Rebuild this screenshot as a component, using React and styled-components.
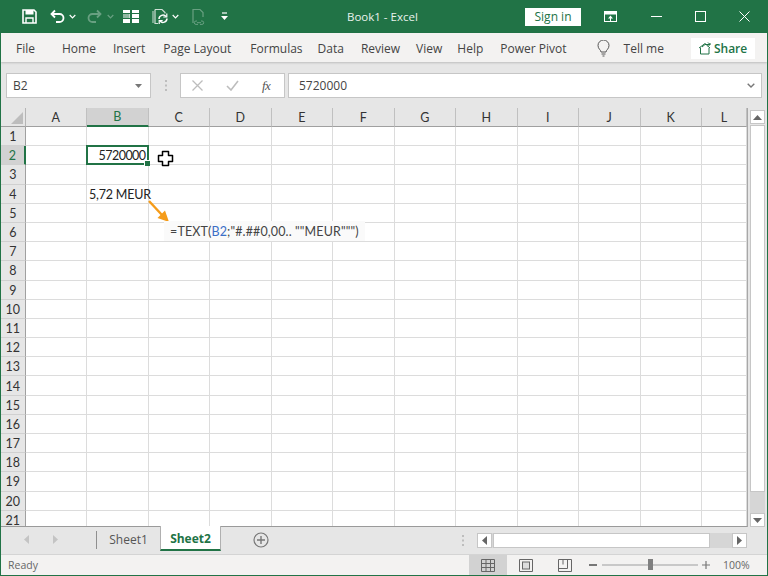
import React from 'react';
import styled, { createGlobalStyle } from 'styled-components';

const Global = createGlobalStyle`
  html, body { margin: 0; padding: 0; background: #fff; }
  * { box-sizing: border-box; }
`;

const UI = `"Open Sans", "Noto Sans", "Liberation Sans", sans-serif`;
const CELL = `Lato, "Open Sans", "Liberation Sans", sans-serif`;
const GREEN = '#217346';

const Window = styled.div`
  width: 768px; height: 576px; display: flex; flex-direction: column; overflow: hidden;
  border: solid ${GREEN}; border-width: 0 1px 1px 1px; background: #e6e6e6; font-family: ${UI}; color: #444;
`;
const TitleBar = styled.header`
  height: 33px; flex: none; background: ${GREEN}; display: flex; align-items: center; position: relative; padding-left: 20px; color: #fff;
`;
const Glyph = styled.svg`
  flex: none; display: block; margin-left: ${p => p.$ml || 0}px; opacity: ${p => p.$dim ? 0.32 : 1};
`;
const DocTitle = styled.div`
  margin-left: 119px; width: 74px; font-size: 11.5px; white-space: nowrap; color: #e9f2ed;
`;
const SignIn = styled.button`
  margin-left: 104px; width: 56px; height: 18px; border: 0; padding: 0; background: #fff; color: ${GREEN};
  font: 12px ${UI}; display: flex; align-items: center; justify-content: center;
`;
const Ribbon = styled.nav`
  height: 29px; flex: none; background: #f3f2f1; display: flex; align-items: center; padding: 2px 0 0 15px;
  box-shadow: 0 1px 2px rgba(0,0,0,.18); position: relative; z-index: 1;
`;
const Tab = styled.span`
  font-size: 12px; color: #444; white-space: nowrap; margin-left: ${p => p.$ml}px;
`;
const ShareButton = styled.button`
  margin-left: 27px; width: 64px; height: 21px; border: 0; background: #fff; color: ${GREEN}; padding: 0 0 0 7px;
  font: 600 12px ${UI}; display: flex; align-items: center; gap: 3px;
`;
const FormulaBar = styled.section`
  height: 46px; flex: none; display: flex; align-items: flex-start; padding: 11px 5px 0 5px; background: #e6e6e6;
`;
const Field = styled.div`
  height: 25px; background: #fff; border: 1px solid #c6c6c6; display: flex; align-items: center; color: #444; font-size: 12px;
`;
const NameBox = styled(Field)`
  width: 145px; padding: 0 8px 0 6px; justify-content: space-between;
`;
const Grip = styled.div`
  width: 29px; height: 25px; display: flex; align-items: center; justify-content: center;
`;
const FxBox = styled(Field)`
  width: 105px; position: relative; padding-left: 11px;
`;
const FxMark = styled.i`
  font: italic 13px "Liberation Serif", serif; color: #555; margin-left: 23px; letter-spacing: -0.5px;
`;
const FormulaInput = styled(Field)`
  width: 474px; margin-left: 3px; padding: 0 6px 0 10px; justify-content: space-between;
`;
const Middle = styled.div`
  height: 419px; flex: none; display: flex;
`;
const Sheet = styled.div`
  position: relative; width: 745.5px; height: 419px; overflow: hidden; flex: none; background: #fff;
  border-bottom: 1px solid #9a9a9a;
  display: grid; grid-template-columns: 24.5px repeat(11, 61.5px) 45px; grid-template-rows: 19px repeat(21, 19.2px);
  font-family: ${CELL}; font-size: 12.5px; color: #333;
`;
const Corner = styled.div`
  background: #e6e6e6; border-bottom: 1px solid #a0a0a0; border-right: 1px solid #b5b5b5; display: flex; align-items: flex-end; justify-content: flex-end; padding: 0 2px 2px 0;
`;
const ColHead = styled.div`
  background: ${p => p.$on ? '#d2d2d2' : '#e6e6e6'}; color: ${p => p.$on ? GREEN : '#333'};
  border-bottom: ${p => p.$on ? `2px solid ${GREEN}` : '1px solid #a0a0a0'}; border-right: 1px solid #c0c0c0;
  display: flex; align-items: center; justify-content: center; font-size: 12.5px;
`;
const RowHead = styled.div`
  background: ${p => p.$on ? '#d2d2d2' : '#e6e6e6'}; color: ${p => p.$on ? GREEN : '#333'};
  border-right: ${p => p.$on ? `2px solid ${GREEN}` : '1px solid #a0a0a0'}; border-bottom: 1px solid #d0d0d0;
  display: flex; align-items: center; justify-content: center; font-size: 12.5px; padding-top: 1px;
`;
const Cell = styled.div`
  border-right: 1px solid #dcdcdc; border-bottom: 1px solid #dcdcdc; position: relative; line-height: 19px; padding: 0 2px;
  white-space: nowrap; text-align: ${p => p.$right ? 'right' : 'left'}; color: #222;
  letter-spacing: ${p => p.$right ? '-0.55px' : '-0.2px'};
`;
const Selection = styled.div`
  position: absolute; left: -1px; top: -1px; right: -1px; bottom: -1px; border: 2px solid ${GREEN}; z-index: 2;
`;
const Handle = styled.div`
  position: absolute; right: -3px; bottom: -3px; width: 6px; height: 6px; background: ${GREEN}; border: 1px solid #fff; border-width: 1px 0 0 1px;
`;
const Callout = styled.div`
  position: absolute; left: 163px; top: 113px; width: 201px; height: 20px; background: #fafafa; z-index: 3;
  padding-left: 6px; line-height: 21px; font-size: 12.5px; letter-spacing: 0.13px; color: #444; white-space: nowrap;
`;
const Ref = styled.span` color: #3b6fc7; `;
const ArrowOverlay = styled.svg`
  position: absolute; left: 145px; top: 90px; z-index: 3;
`;
const CursorOverlay = styled.svg`
  position: absolute; left: 156px; top: 42px; z-index: 3;
`;
const VScroll = styled.div`
  flex: 1; display: flex; flex-direction: column; align-items: center; padding: 2px 2px 0 2px; background: #e6e6e6; border-left: 1px solid #a8a8a8; height: 419px;
`;
const ScrollBtn = styled.div`
  flex: none; width: ${p => p.$w || 15}px; height: ${p => p.$h || 15}px; background: #fff; border: 1px solid #c6c6c6; display: flex; align-items: center; justify-content: center;
`;
const VThumb = styled.div`
  width: 15px; height: 367px; flex: none; margin-top: 1px; background: #fff; border: 1px solid #c6c6c6;
`;
const VTrack = styled.div`
  flex: 1; width: 15px; background: #d6d6d6;
`;
const SheetBar = styled.div`
  height: 27px; flex: none; background: #e6e6e6; display: flex; align-items: center; position: relative;
`;
const TabNav = styled.div`
  width: 96px; height: 18px; display: flex; align-items: center; padding-left: 23px; gap: 24px; border-right: 1px solid #8f8f8f; flex: none; margin-top: -2px;
`;
const SheetTab = styled.div`
  height: ${p => p.$on ? 25 : 24}px; width: ${p => p.$w}px; flex: none; display: flex; align-items: center; justify-content: center; align-self: flex-start;
  font-size: 12px; color: ${p => p.$on ? GREEN : '#555'}; font-weight: ${p => p.$on ? 700 : 400}; padding-top: 1px;
  background: ${p => p.$on ? '#fff' : 'transparent'}; border-bottom: ${p => p.$on ? `2px solid ${GREEN}` : '0'};
  margin-top: ${p => p.$on ? -1 : 0}px; border-left: ${p => p.$on ? '1px solid #b0b0b0' : '0'}; border-right: ${p => p.$on ? '1px solid #b0b0b0' : '0'};
  position: relative; z-index: 1;
`;
const AddSheet = styled.div`
  margin-left: 32px; margin-top: -2px; flex: none; display: flex;
`;
const HGrip = styled.div`
  margin-left: 193px; margin-top: -1px; flex: none; display: flex;
`;
const HScroll = styled.div`
  margin-left: 13px; margin-top: -1px; width: 270px; height: 15px; flex: none; display: flex; background: #d6d6d6;
`;
const HThumb = styled.div`
  width: 217px; height: 15px; flex: none; margin-left: 1px; background: #fff; border: 1px solid #c6c6c6;
`;
const HSpacer = styled.div` flex: 1; `;
const StatusBar = styled.footer`
  flex: 1; background: #f3f2f1; border-top: 1px solid #d4d4d4; display: flex; align-items: stretch; font-size: 10.5px; color: #666;
`;
const Ready = styled.div`
  width: 467.5px; padding: 0 0 1px 7px; display: flex; align-items: center; flex: none;
`;
const ViewBtn = styled.div`
  width: 38.5px; flex: none; display: flex; align-items: center; justify-content: center; background: ${p => p.$on ? '#d2d2d2' : 'transparent'};
`;
const Zoomer = styled.div`
  flex: 1; display: flex; align-items: center; padding-left: 5px;
`;
const SliderTrack = styled.div`
  width: 96px; height: 2px; background: #c8c8c8; margin: 0 4px 0 5px; position: relative; flex: none;
`;
const SliderThumb = styled.div`
  position: absolute; left: 46px; top: -5px; width: 5px; height: 11px; background: #808080;
`;
const Percent = styled.span` margin-left: 13px; font-size: 10.5px; color: #666; `;

const Chevron = ({ ml, dim }) => (
  <Glyph $ml={ml} $dim={dim} width="7" height="5" viewBox="0 0 7 5"><path d="M.7 1l2.8 2.8L6.3 1" fill="none" stroke="#fff" strokeWidth="1.2" /></Glyph>
);

const cols = 'ABCDEFGHIJKL'.split('');
const rows = Array.from({ length: 21 }, (_, i) => i + 1);

function cellContent(row, col) {
  if (row === 2 && col === 'B') return <>5720000<Selection><Handle /></Selection></>;
  if (row === 4 && col === 'B') return '5,72 MEUR';
  return null;
}

export default function App() {
  return (
    <Window>
      <Global />
      <TitleBar>
        <Glyph $ml={1} width="15" height="15" viewBox="0 0 15 15">
          <path d="M1 1h11l2 2v11H1z" fill="none" stroke="#fff" strokeWidth="1.6" />
          <rect x="3.5" y="1" width="8" height="4.5" fill="#fff" />
          <path d="M4 14V9h7v5" fill="none" stroke="#fff" strokeWidth="1.4" />
        </Glyph>
        <Glyph $ml={13} width="16" height="15" viewBox="0 0 16 15">
          <path d="M5 1.5L1.5 5 5 8.500M2 5h7.500a4 4 0 0 1 0 8H6" fill="none" stroke="#fff" strokeWidth="1.8" />
        </Glyph>
        <Chevron ml={3} />
        <Glyph $ml={10} $dim width="16" height="15" viewBox="0 0 16 15">
          <path d="M11 1.500L14.500 5 11 8.500M14 5H6.500a4 4 0 0 0 0 8H10" fill="none" stroke="#fff" strokeWidth="1.8" />
        </Glyph>
        <Chevron ml={5} dim />
        <Glyph $ml={9} width="16" height="13" viewBox="0 0 16 13">
          <rect x="0" y="0" width="16" height="13" fill="#fff" />
          <path d="M0 3.500h16M0 8.500h16M7.500 0v13M8.500 0v13" stroke={GREEN} strokeWidth="1" />
          <rect x="0" y="4" width="6.500" height="4.500" fill={GREEN} opacity=".5" />
        </Glyph>
        <Glyph $ml={13} width="18" height="17" viewBox="0 0 18 17">
          <path d="M3 1.500h7l3 3v1M3 1.500v14h3" fill="none" stroke="#cfe0d6" strokeWidth="1.2" />
          <path d="M1 3v12" stroke="#cfe0d6" strokeWidth="1" />
          <path d="M7 11a4 4 0 0 1 7-2.500M15 10.500a4 4 0 0 1-7 2.500" fill="none" stroke="#fff" strokeWidth="1.500" />
          <path d="M14.800 5.500v3.500h-3.500M7.200 16v-3.500h3.500" fill="none" stroke="#fff" strokeWidth="1.200" />
        </Glyph>
        <Chevron ml={2} />
        <Glyph $ml={12} $dim width="15" height="17" viewBox="0 0 15 17">
          <path d="M2 15V1.500h7L12 4.500V9" fill="none" stroke="#fff" strokeWidth="1.200" />
          <path d="M6 13h-1a1.700 1.700 0 0 0 0 3.400h2M10 13h1a1.700 1.700 0 0 1 0 3.400H9M6 14.700h4" fill="none" stroke="#fff" strokeWidth="1" />
        </Glyph>
        <Glyph $ml={15} width="7" height="9" viewBox="0 0 7 9">
          <path d="M1 1h5" stroke="#fff" strokeWidth="1.200" /><path d="M0 4h7L3.500 8z" fill="#fff" />
        </Glyph>
        <DocTitle>Book1 - Excel</DocTitle>
        <SignIn>Sign in</SignIn>
        <Glyph $ml={23} width="13" height="11" viewBox="0 0 13 11">
          <rect x=".5" y=".5" width="12" height="10" fill="none" stroke="#fff" />
          <rect x="1" y="1" width="11" height="2.500" fill="#fff" />
          <path d="M4 7.500L6.500 4.500 9 7.500z M6 7h1v3H6z" fill="#fff" />
        </Glyph>
        <Glyph $ml={34} width="11" height="1" viewBox="0 0 11 1"><rect width="11" height="1" fill="#fff" /></Glyph>
        <Glyph $ml={33} width="11" height="11" viewBox="0 0 11 11"><rect x=".5" y=".5" width="10" height="10" fill="none" stroke="#fff" /></Glyph>
        <Glyph $ml={33} width="11" height="11" viewBox="0 0 11 11"><path d="M.5.500l10 10M10.500.500l-10 10" stroke="#fff" /></Glyph>
      </TitleBar>

      <Ribbon>
        <Tab $ml={0}>File</Tab>
        <Tab $ml={27}>Home</Tab>
        <Tab $ml={17}>Insert</Tab>
        <Tab $ml={18}>Page Layout</Tab>
        <Tab $ml={19}>Formulas</Tab>
        <Tab $ml={15}>Data</Tab>
        <Tab $ml={17}>Review</Tab>
        <Tab $ml={16}>View</Tab>
        <Tab $ml={15}>Help</Tab>
        <Tab $ml={17}>Power Pivot</Tab>
        <Glyph $ml={30} width="13" height="17" viewBox="0 0 13 17">
          <path d="M4 12c0-2-3-3-3-6.500a5.500 5.500 0 0 1 11 0C12 9 9 10 9 12z" fill="none" stroke="#555" />
          <path d="M4.500 14h4M5.500 16h2" stroke="#555" />
        </Glyph>
        <Tab $ml={14}>Tell me</Tab>
        <ShareButton>
          <Glyph width="13" height="13" viewBox="0 0 13 13">
            <path d="M4 5L7 2.500h5V1M12 2.500L10 .500M12 2.500L10 4.500" fill="none" stroke={GREEN} />
            <path d="M1 6L7 1.500 12 6M2.500 5.500V12h8.500V6" fill="none" stroke={GREEN} />
          </Glyph>
          Share
        </ShareButton>
      </Ribbon>

      <FormulaBar>
        <NameBox>
          B2
          <Glyph width="7" height="4" viewBox="0 0 7 4"><path d="M0 0h7L3.500 4z" fill="#777" /></Glyph>
        </NameBox>
        <Grip>
          <Glyph width="2" height="11" viewBox="0 0 2 11">
            <path d="M0 0h2v2H0zM0 4.500h2v2H0zM0 9h2v2H0z" fill="#bdbdbd" />
          </Glyph>
        </Grip>
        <FxBox>
          <Glyph width="11" height="11" viewBox="0 0 11 11"><path d="M.5.500l10 10M10.500.500l-10 10" stroke="#bdbdbd" strokeWidth="1.300" /></Glyph>
          <Glyph $ml={23} width="13" height="11" viewBox="0 0 13 11"><path d="M1 6l4 4 7-9" fill="none" stroke="#bdbdbd" strokeWidth="1.600" /></Glyph>
          <FxMark>fx</FxMark>
        </FxBox>
        <FormulaInput>
          5720000
          <Glyph width="8" height="5" viewBox="0 0 8 5"><path d="M.7.700L4 4l3.300-3.300" fill="none" stroke="#777" strokeWidth="1.400" /></Glyph>
        </FormulaInput>
      </FormulaBar>

      <Middle>
        <Sheet>
          <Corner>
            <Glyph width="12" height="12" viewBox="0 0 12 12"><path d="M12 0v12H0z" fill="#bdbdbd" /></Glyph>
          </Corner>
          {cols.map(c => <ColHead key={c} $on={c === 'B'}>{c}</ColHead>)}
          {rows.map(r => (
            <React.Fragment key={r}>
              <RowHead $on={r === 2}>{r}</RowHead>
              {cols.map(c => (
                <Cell key={c} $right={r === 2 && c === 'B'}>{cellContent(r, c)}</Cell>
              ))}
            </React.Fragment>
          ))}
          <ArrowOverlay width="26" height="26" viewBox="0 0 26 26">
            <path d="M3 3l13 14" stroke="#f59c1a" strokeWidth="2.400" fill="none" />
            <path d="M23 24L11.500 20 19 12.500z" fill="#f59c1a" />
          </ArrowOverlay>
          <Callout>=TEXT(<Ref>B2</Ref>;"#.##0,00.. ""MEUR""")</Callout>
          <CursorOverlay width="17" height="17" viewBox="0 0 17 17">
            <path d="M5.500 1.500h6v4h4v6h-4v4h-6v-4h-4v-6h4z" fill="#fff" stroke="#000" strokeWidth="1.500" strokeLinejoin="round" />
          </CursorOverlay>
        </Sheet>
        <VScroll>
          <ScrollBtn $h={14}>
            <Glyph width="9" height="5" viewBox="0 0 9 5"><path d="M0 5L4.500 0 9 5z" fill="#666" /></Glyph>
          </ScrollBtn>
          <VThumb />
          <VTrack />
          <ScrollBtn $h={14}>
            <Glyph width="9" height="5" viewBox="0 0 9 5"><path d="M0 0l4.500 5L9 0z" fill="#666" /></Glyph>
          </ScrollBtn>
        </VScroll>
      </Middle>

      <SheetBar>
        <TabNav>
          <Glyph width="5" height="9" viewBox="0 0 5 9"><path d="M5 0v9L0 4.500z" fill="#c4c4c4" /></Glyph>
          <Glyph width="5" height="9" viewBox="0 0 5 9"><path d="M0 0v9l5-4.500z" fill="#c4c4c4" /></Glyph>
        </TabNav>
        <SheetTab $w={63}>Sheet1</SheetTab>
        <SheetTab $w={61} $on>Sheet2</SheetTab>
        <AddSheet>
          <Glyph width="16" height="16" viewBox="0 0 16 16">
            <circle cx="8" cy="8" r="7" fill="none" stroke="#777" strokeWidth="1.200" />
            <path d="M8 4v8M4 8h8" stroke="#777" strokeWidth="1.400" />
          </Glyph>
        </AddSheet>
        <HGrip>
          <Glyph width="2" height="11" viewBox="0 0 2 11">
            <path d="M0 0h2v2H0zM0 4.500h2v2H0zM0 9h2v2H0z" fill="#bdbdbd" />
          </Glyph>
        </HGrip>
        <HScroll>
          <ScrollBtn>
            <Glyph width="5" height="9" viewBox="0 0 5 9"><path d="M5 0v9L0 4.500z" fill="#666" /></Glyph>
          </ScrollBtn>
          <HThumb />
          <HSpacer />
          <ScrollBtn>
            <Glyph width="5" height="9" viewBox="0 0 5 9"><path d="M0 0v9l5-4.500z" fill="#666" /></Glyph>
          </ScrollBtn>
        </HScroll>
      </SheetBar>

      <StatusBar>
        <Ready>Ready</Ready>
        <ViewBtn $on>
          <Glyph width="14" height="13" viewBox="0 0 14 13">
            <path d="M.5.500h13v12H.5zM.5 4.500h13M.5 8.500h13M5 .500v12M9.500.500v12" fill="none" stroke="#666" />
          </Glyph>
        </ViewBtn>
        <ViewBtn>
          <Glyph width="14" height="13" viewBox="0 0 14 13">
            <path d="M.5.500h13v12H.5z" fill="none" stroke="#666" /><rect x="3.500" y="3" width="7" height="7" fill="#ddd" stroke="#666" />
          </Glyph>
        </ViewBtn>
        <ViewBtn>
          <Glyph width="14" height="13" viewBox="0 0 14 13">
            <path d="M.5.500h13v12H.5zM.5 9.500h9V.500M5 .500v5" fill="none" stroke="#666" />
          </Glyph>
        </ViewBtn>
        <Zoomer>
          <Glyph width="8" height="2" viewBox="0 0 8 2"><rect width="8" height="2" fill="#777" /></Glyph>
          <SliderTrack><SliderThumb /></SliderTrack>
          <Glyph width="8" height="8" viewBox="0 0 8 8"><path d="M0 4h8M4 0v8" stroke="#777" strokeWidth="1.200" /></Glyph>
          <Percent>100%</Percent>
        </Zoomer>
      </StatusBar>
    </Window>
  );
}
